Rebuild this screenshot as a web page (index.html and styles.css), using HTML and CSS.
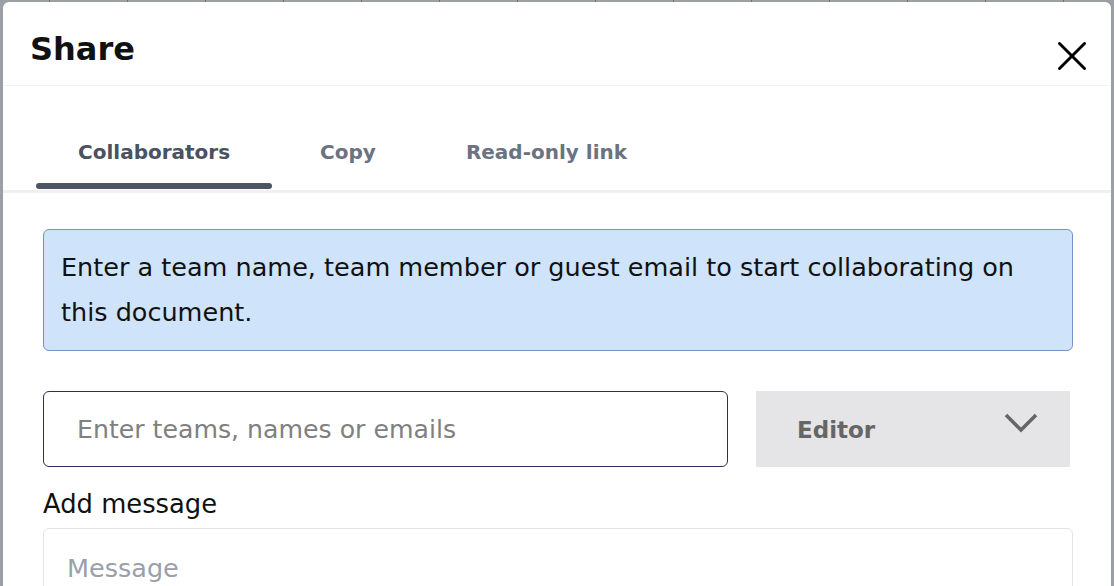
FILE: index.html
```html
<!DOCTYPE html>
<html lang="en">
<head>
    <meta charset="UTF-8">
    <meta name="viewport" content="width=device-width, initial-scale=1.0">
    <title>Share</title>
    <link rel="stylesheet" href="styles.css">
</head>
<body>
    <div class="backdrop-strip"></div>
    <div class="modal">
        <div class="modal-header">
            <h2>Share</h2>
            <button class="close-btn" aria-label="Close">
                <svg width="30" height="30" viewBox="0 0 30 30">
                    <path d="M2.5 2.5 L27.5 27.5 M27.5 2.5 L2.5 27.5" stroke="#000" stroke-width="3" stroke-linecap="round" fill="none"/>
                </svg>
            </button>
        </div>

        <div class="tabs">
            <div class="tab active">Collaborators</div>
            <div class="tab">Copy</div>
            <div class="tab">Read-only link</div>
        </div>

        <div class="modal-body">
            <div class="info-box">
                Enter a team name, team member or guest email to start collaborating on this document.
            </div>

            <div class="invite-row">
                <input type="text" class="invite-input" placeholder="Enter teams, names or emails">
                <div class="role-select">
                    <span>Editor</span>
                    <svg width="34" height="20" viewBox="0 0 34 20">
                        <path d="M2 2 L17 17 L32 2" stroke="#666" stroke-width="3.5" fill="none"/>
                    </svg>
                </div>
            </div>

            <label for="message" class="message-label">Add message</label>
            <textarea id="message" class="message-input" placeholder="Message"></textarea>
        </div>
    </div>
</body>
</html>
```

FILE: styles.css
```css
body {
    font-family: 'DejaVu Sans', sans-serif;
    margin: 0;
    background-color: #9b9fa6;
    overflow: hidden;
    height: 586px;
}

.backdrop-strip {
    height: 2px;
    background: repeating-linear-gradient(90deg, transparent 0, transparent 49px, #6f737a 49px, #6f737a 50px, transparent 50px, transparent 78px);
}

.modal {
    margin: 0 3px;
    background-color: #fff;
    border-radius: 6px 6px 0 0;
    height: 584px;
    overflow: hidden;
}

.modal-header {
    display: flex;
    justify-content: space-between;
    align-items: center;
    height: 83px;
    padding: 0 23px 0 28px;
    border-bottom: 1px solid #f2f2f2;
}

.modal-header h2 {
    margin: 0;
    font-size: 32px;
    font-weight: 700;
    color: #111;
    position: relative;
    top: 5px;
    left: -1px;
}

.close-btn {
    background: none;
    border: none;
    padding: 0;
    width: 30px;
    height: 30px;
    cursor: pointer;
    position: relative;
    top: 12px;
    left: -1px;
}

.tabs {
    display: flex;
    gap: 6px;
    height: 107px;
    padding-left: 33px;
    border-bottom: 3px solid #f0f0f0;
    box-sizing: border-box;
    align-items: stretch;
}

.tab {
    display: flex;
    align-items: center;
    padding: 27px 42px 0;
    font-size: 20px;
    font-weight: 700;
    color: #6b7280;
    position: relative;
}

.tab.active {
    color: #4a5160;
}

.tab.active::after {
    content: "";
    position: absolute;
    left: 0;
    right: 0;
    bottom: 1px;
    height: 6px;
    border-radius: 3px;
    background-color: #4b5563;
}

.modal-body {
    padding: 36px 38px 0 40px;
}

.info-box {
    background-color: #cfe3fa;
    border: 1px solid #7393c6;
    border-radius: 6px;
    padding: 15px 30px 15px 17px;
    font-size: 25.5px;
    line-height: 45px;
    color: #111;
}

.invite-row {
    display: flex;
    gap: 28px;
    margin-top: 40px;
    padding-right: 3px;
}

.invite-input {
    width: 685px;
    height: 76px;
    box-sizing: border-box;
    border: 1px solid #2b2f5c;
    border-radius: 6px;
    padding: 0 20px 0 33px;
    font-family: 'DejaVu Sans', sans-serif;
    font-size: 25.2px;
    color: #111;
    outline: none;
}

.invite-input::placeholder {
    color: #808080;
}

.role-select {
    flex: 1;
    height: 76px;
    display: flex;
    align-items: center;
    justify-content: space-between;
    padding: 0 32px 0 41px;
    background-color: #e5e5e7;
    font-size: 23px;
    font-weight: 700;
    color: #666;
}

.role-select span {
    position: relative;
    top: 1px;
}

.role-select svg {
    position: relative;
    top: -6px;
}

.message-label {
    display: block;
    margin-top: 22px;
    font-size: 25.8px;
    line-height: 30px;
    color: #111;
}

.message-input {
    display: block;
    width: 100%;
    height: 120px;
    margin-top: 9px;
    box-sizing: border-box;
    border: 1px solid #e3e3e3;
    border-radius: 6px;
    padding: 24px 23px;
    font-family: 'DejaVu Sans', sans-serif;
    font-size: 25.5px;
    line-height: 30px;
    resize: none;
    outline: none;
}

.message-input::placeholder {
    color: #9aa0a8;
}
```
